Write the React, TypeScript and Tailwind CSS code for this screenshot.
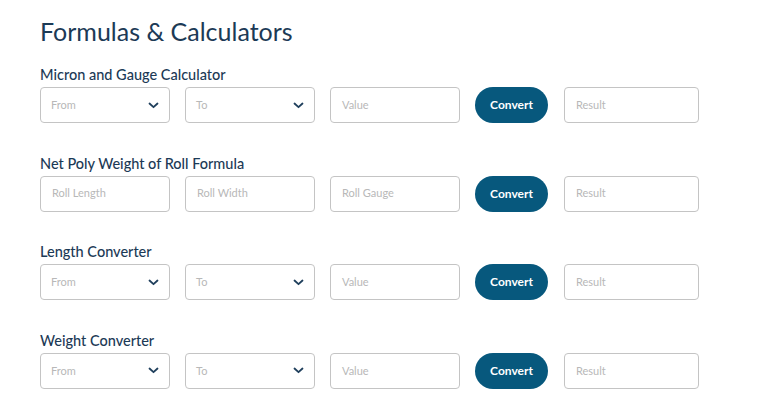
import React from "react";

const Chevron = () => (
  <svg width="11" height="7" viewBox="0 0 11 7" fill="none">
    <path d="M1.5 1.5L5.5 5.2L9.5 1.5" stroke="#1f3f5c" strokeWidth="1.8" strokeLinecap="round" strokeLinejoin="round" />
  </svg>
);

const Select = ({ label }: { label: string }) => (
  <div className="flex h-[36px] w-[130px] items-center justify-between rounded-[4px] border border-[#c4c4c4] pl-[10px] pr-[10px]">
    <span className="text-[11px] text-[#b8b8b8]">{label}</span>
    <Chevron />
  </div>
);

const Input = ({ label }: { label: string }) => (
  <div className="flex h-[36px] w-[130px] items-center rounded-[4px] border border-[#c4c4c4] pl-[11px]">
    <span className="text-[11px] text-[#b8b8b8]">{label}</span>
  </div>
);

const Result = () => (
  <div className="ml-[1px] flex h-[36px] w-[135px] items-center rounded-[4px] border border-[#c4c4c4] pl-[11px]">
    <span className="text-[11px] text-[#b8b8b8]">Result</span>
  </div>
);

const Button = () => (
  <div className="flex h-[36px] w-[73px] items-center justify-center rounded-full bg-[#07587d] text-[12px] font-bold text-white">
    Convert
  </div>
);

const Section = ({ title, children }: { title: string; children: React.ReactNode }) => (
  <div className="flex flex-col">
    <div className="h-[19px] text-[14.5px] font-medium leading-[19px] text-[#1c3a56]">{title}</div>
    <div className="mt-[3px] flex items-center gap-[15px]">{children}</div>
  </div>
);

export default function App() {
  return (
    <div
      className="h-[400px] w-[768px] bg-white pl-[40px] pt-[15px]"
      style={{ fontFamily: "Lato, 'Open Sans', sans-serif" }}
    >
      <h1 className="text-[25px] leading-[32px] font-normal text-[#1c3a56]">Formulas &amp; Calculators</h1>
      <div className="mt-[18px] flex flex-col gap-[30.67px]">
        <Section title="Micron and Gauge Calculator">
          <Select label="From" />
          <Select label="To" />
          <Input label="Value" />
          <Button />
          <Result />
        </Section>
        <Section title="Net Poly Weight of Roll Formula">
          <Input label="Roll Length" />
          <Input label="Roll Width" />
          <Input label="Roll Gauge" />
          <Button />
          <Result />
        </Section>
        <Section title="Length Converter">
          <Select label="From" />
          <Select label="To" />
          <Input label="Value" />
          <Button />
          <Result />
        </Section>
        <Section title="Weight Converter">
          <Select label="From" />
          <Select label="To" />
          <Input label="Value" />
          <Button />
          <Result />
        </Section>
      </div>
    </div>
  );
}
